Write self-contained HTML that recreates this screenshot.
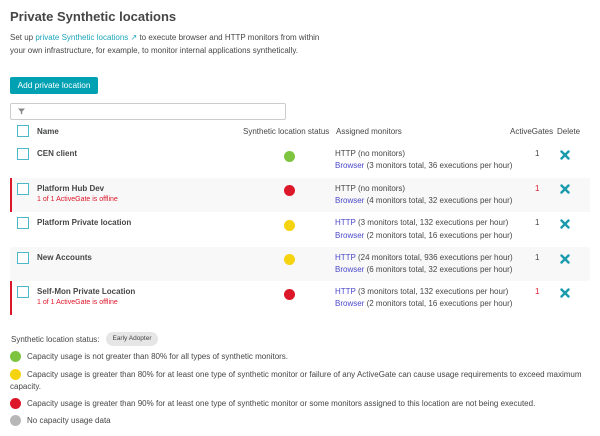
<!DOCTYPE html>
<html><head><meta charset="utf-8"><style>
*{margin:0;padding:0;box-sizing:border-box}
body{width:600px;height:436px;background:#fff;font-family:"Liberation Sans",sans-serif;color:#454646;font-size:8px;position:relative;overflow:hidden}
.a{position:absolute;white-space:nowrap}
.cb{position:absolute;width:12px;height:12px;border:1.5px solid #4fb8c8;background:#fff}
.dot{position:absolute;width:11px;height:11px;border-radius:50%}
.g{background:#7dc540}.y{background:#f5d30f}.r{background:#dc172a}.gr{background:#b7b7b7}
.row{position:absolute;left:10px;width:580px;height:34px}
.alt{background:#f8f8f8}
.bar{position:absolute;left:0;top:0;width:2px;height:34px;background:#dc172a}
.b{font-weight:bold;color:#454646}
.lk{color:#4b48c8}
.x{position:absolute;width:10px;height:10px}
.off{color:#dc172a;font-size:7px}
</style></head><body>
<svg width="0" height="0" style="position:absolute"><defs><symbol id="x" viewBox="0 0 10 10"><path d="M1.5 1.5L8.5 8.5M8.5 1.5L1.5 8.5" stroke="#1a9aab" stroke-width="2.4" stroke-linecap="round"/></symbol></defs></svg>
<div class="a" style="left:10px;top:9px;font-size:13px;font-weight:bold;color:#454646">Private Synthetic locations</div>
<div class="a" style="left:10px;top:32px;line-height:12.5px">Set up <span style="color:#1ba5b8">private Synthetic locations &#x2197;</span> to execute browser and HTTP monitors from within<br>your own infrastructure, for example, to monitor internal applications synthetically.</div>
<div class="a" style="left:10px;top:77px;width:88px;height:17px;background:#00a1b2;border-radius:2px;color:#fff;font-size:8.3px;line-height:17px;text-align:center">Add private location</div>
<div class="a" style="left:10px;top:103px;width:276px;height:17px;border:1px solid #ccc;border-radius:2px"><svg style="position:absolute;left:7px;top:4px" width="7" height="7" viewBox="0 0 7 7"><path d="M0 0.5H7L4.2 3.6V6.5L2.8 5.8V3.6Z" fill="#888"/></svg></div>

<div class="cb" style="left:17px;top:125px"></div>
<div class="a b" style="left:37px;top:127px">Name</div>
<div class="a" style="left:243px;top:127px">Synthetic location status</div>
<div class="a" style="left:336px;top:127px">Assigned monitors</div>
<div class="a" style="left:510px;top:127px">ActiveGates</div>
<div class="a" style="left:557px;top:127px">Delete</div>

<div class="row" style="top:143px"></div>
<div class="row alt" style="top:178px"><div class="bar"></div></div>
<div class="row" style="top:212px"></div>
<div class="row alt" style="top:247px"></div>
<div class="row" style="top:281px"><div class="bar"></div></div>

<div class="cb" style="left:17px;top:148px"></div>
<div class="a b" style="left:37px;top:149px">CEN client</div>
<div class="dot g" style="left:284px;top:151px"></div>
<div class="a" style="left:335px;top:149px">HTTP (no monitors)</div>
<div class="a" style="left:335px;top:161px"><span class="lk">Browser</span> (3 monitors total, 36 executions per hour)</div>
<div class="a" style="left:535px;top:149px">1</div>
<svg class="x" style="left:560px;top:150px"><use href="#x"/></svg>

<div class="cb" style="left:17px;top:183px"></div>
<div class="a b" style="left:37px;top:184px">Platform Hub Dev</div>
<div class="a off" style="left:37px;top:196px">1 of 1 ActiveGate is offline</div>
<div class="dot r" style="left:284px;top:185px"></div>
<div class="a" style="left:335px;top:184px">HTTP (no monitors)</div>
<div class="a" style="left:335px;top:196px"><span class="lk">Browser</span> (4 monitors total, 32 executions per hour)</div>
<div class="a" style="left:535px;top:184px;color:#dc172a">1</div>
<svg class="x" style="left:560px;top:184px"><use href="#x"/></svg>

<div class="cb" style="left:17px;top:217px"></div>
<div class="a b" style="left:37px;top:218px">Platform Private location</div>
<div class="dot y" style="left:284px;top:220px"></div>
<div class="a" style="left:335px;top:218px"><span class="lk">HTTP</span> (3 monitors total, 132 executions per hour)</div>
<div class="a" style="left:335px;top:231px"><span class="lk">Browser</span> (2 monitors total, 16 executions per hour)</div>
<div class="a" style="left:535px;top:218px">1</div>
<svg class="x" style="left:560px;top:219px"><use href="#x"/></svg>

<div class="cb" style="left:17px;top:252px"></div>
<div class="a b" style="left:37px;top:253px">New Accounts</div>
<div class="dot y" style="left:284px;top:254px"></div>
<div class="a" style="left:335px;top:253px"><span class="lk">HTTP</span> (24 monitors total, 936 executions per hour)</div>
<div class="a" style="left:335px;top:265px"><span class="lk">Browser</span> (6 monitors total, 32 executions per hour)</div>
<div class="a" style="left:535px;top:253px">1</div>
<svg class="x" style="left:560px;top:254px"><use href="#x"/></svg>

<div class="cb" style="left:17px;top:286px"></div>
<div class="a b" style="left:37px;top:287px">Self-Mon Private Location</div>
<div class="a off" style="left:37px;top:299px">1 of 1 ActiveGate is offline</div>
<div class="dot r" style="left:284px;top:289px"></div>
<div class="a" style="left:335px;top:287px"><span class="lk">HTTP</span> (3 monitors total, 132 executions per hour)</div>
<div class="a" style="left:335px;top:299px"><span class="lk">Browser</span> (2 monitors total, 16 executions per hour)</div>
<div class="a" style="left:535px;top:287px;color:#dc172a">1</div>
<svg class="x" style="left:560px;top:288px"><use href="#x"/></svg>

<div class="a" style="left:11px;top:335px">Synthetic location status:</div>
<div class="a" style="left:106px;top:332px;width:52px;height:14px;border-radius:7px;background:#e6e6e6;font-size:6.5px;line-height:14px;text-align:center">Early Adopter</div>
<div class="dot g" style="left:10px;top:351px"></div>
<div class="a" style="left:27px;top:352px">Capacity usage is not greater than 80% for all types of synthetic monitors.</div>
<div class="dot y" style="left:10px;top:369px"></div>
<div class="a" style="left:27px;top:370px">Capacity usage is greater than 80% for at least one type of synthetic monitor or failure of any ActiveGate can cause usage requirements to exceed maximum</div>
<div class="a" style="left:10px;top:382px">capacity.</div>
<div class="dot r" style="left:10px;top:398px"></div>
<div class="a" style="left:27px;top:399px">Capacity usage is greater than 90% for at least one type of synthetic monitor or some monitors assigned to this location are not being executed.</div>
<div class="dot gr" style="left:10px;top:415px"></div>
<div class="a" style="left:27px;top:416px">No capacity usage data</div>
</body></html>
